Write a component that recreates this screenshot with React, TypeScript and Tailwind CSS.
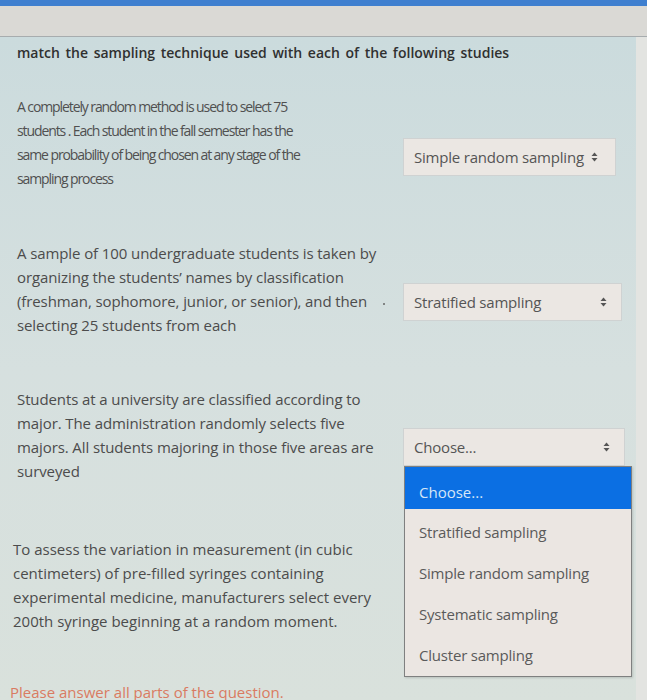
import React from "react";

const font = { fontFamily: '"Open Sans", "Noto Sans", sans-serif' };

function Arrows() {
  return (
    <svg width="7" height="10" viewBox="0 0 7 10" className="shrink-0">
      <path d="M3.5 0.5 L6.5 4 L0.5 4 Z" fill="#555" />
      <path d="M3.5 9.5 L6.5 6 L0.5 6 Z" fill="#555" />
    </svg>
  );
}

function Select({ label, w, arrowPad }: { label: string; w: string; arrowPad: string }) {
  return (
    <div className={`${w} h-[38px] bg-[#ebe7e3] border border-[#cfd2d2] flex items-center pl-[10px] ${arrowPad} text-[15px] text-[#555] justify-between`}>
      <span className="tracking-[-0.2px]">{label}</span>
      <Arrows />
    </div>
  );
}

export default function App() {
  return (
    <div className="w-[647px] h-[700px] overflow-hidden flex flex-col bg-[#e2e3e0]" style={font}>
      <div className="h-[6px] shrink-0 bg-[#3f7fcf]" />
      <div className="h-[31px] shrink-0 bg-[#dad9d5] border-b border-[#a7acae]" />
      <div className="flex flex-1 min-h-0 overflow-hidden">
        <div className="w-[636px] shrink-0 bg-linear-to-b from-[#cbdbdd] via-[#d6e0df] to-[#d9e1dc] pl-[17px] pt-[4px] flex flex-col">
          <div className="text-[14px] leading-[24px] font-semibold text-[#303030] [word-spacing:2px]">
            match the sampling technique used with each of the following studies
          </div>

          <div className="flex mt-[30px] shrink-0">
            <div className="w-[386px] text-[14px] leading-[24px] text-[#505050] tracking-[-1.1px]">
              A completely random method is used to select 75<br />
              students . Each student in the fall semester has the<br />
              same probability of being chosen at any stage of the<br />
              sampling process
            </div>
            <div className="mt-[43px]">
              <Select label="Simple random sampling" w="w-[213px]" arrowPad="pr-[17px]" />
            </div>
          </div>

          <div className="flex mt-[50px] shrink-0">
            <div className="w-[386px] text-[15px] leading-[24px] text-[#4c4c4c] tracking-[-0.1px] relative">
              A sample of 100 undergraduate students is taken by<br />
              organizing the students’ names by classification<br />
              (freshman, sophomore, junior, or senior), and then<br />
              selecting 25 students from each
              <span className="absolute left-[366px] top-[62px] w-[2px] h-[2px] bg-[#666] rounded-full" />
            </div>
            <div className="mt-[42px]">
              <Select label="Stratified sampling" w="w-[219px]" arrowPad="pr-[14px]" />
            </div>
          </div>

          <div className="flex mt-[50px] shrink-0">
            <div className="w-[386px] text-[15px] leading-[24px] text-[#4c4c4c] tracking-[-0.1px]">
              Students at a university are classified according to<br />
              major. The administration randomly selects five<br />
              majors. All students majoring in those five areas are<br />
              surveyed
            </div>
            <div className="mt-[41px] relative">
              <Select label="Choose..." w="w-[222px]" arrowPad="pr-[14px]" />
              <div className="absolute left-[1px] top-[38px] w-[228px] bg-[#ebe6e2] border border-[#7f8080] text-[15px] text-[#5a5a5a] pb-[3px] shadow-[1px_1px_2px_rgba(0,0,0,0.15)] z-10">
                <div className="h-[42px] bg-[#0b6fe3] text-[#d6e6f7] flex items-center pl-[14px] pt-[8px]">Choose...</div>
                <div className="h-[41px] flex items-center pl-[14px] pt-[6px] tracking-[-0.2px]">Stratified sampling</div>
                <div className="h-[41px] flex items-center pl-[14px] pt-[6px] tracking-[-0.2px]">Simple random sampling</div>
                <div className="h-[41px] flex items-center pl-[14px] pt-[6px] tracking-[-0.2px]">Systematic sampling</div>
                <div className="h-[41px] flex items-center pl-[14px] pt-[6px] tracking-[-0.2px]">Cluster sampling</div>
              </div>
            </div>
          </div>

          <div className="flex mt-[54px] -ml-[4px] shrink-0">
            <div className="w-[390px] text-[15px] leading-[24px] text-[#4c4c4c]">
              To assess the variation in measurement (in cubic<br />
              centimeters) of pre-filled syringes containing<br />
              experimental medicine, manufacturers select every<br />
              200th syringe beginning at a random moment.
            </div>
          </div>

          <div className="mt-[47px] -ml-[7px] shrink-0 text-[15px] leading-[24px] text-[#d97b62]">
            Please answer all parts of the question.
          </div>
        </div>
        <div className="flex-1 bg-[#e3e4e1]" />
      </div>
    </div>
  );
}
